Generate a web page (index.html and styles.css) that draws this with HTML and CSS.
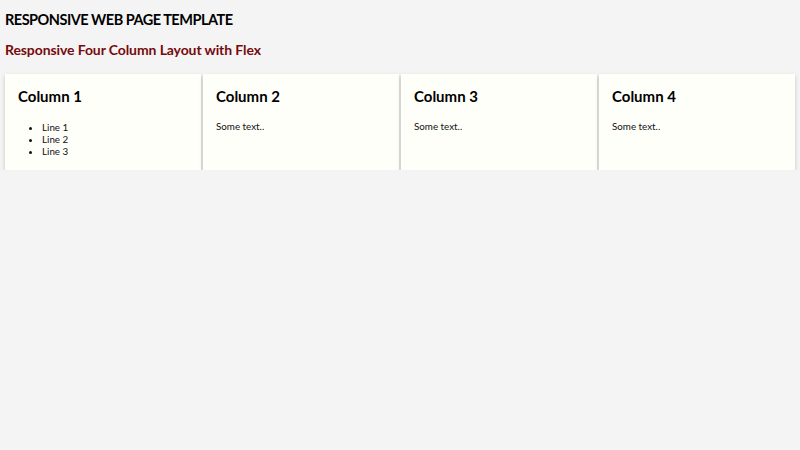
FILE: index.html
```html
<!DOCTYPE html>
<html>
<head>
<meta charset="utf-8">
<link rel="stylesheet" href="styles.css">
</head>
<body>
<h2 class="title">RESPONSIVE WEB PAGE TEMPLATE</h2>
<h3 class="subtitle">Responsive Four Column Layout with Flex</h3>
<div class="row">
  <div class="col">
    <h2 class="col-title">Column 1</h2>
    <ul class="list">
      <li>Line 1</li>
      <li>Line 2</li>
      <li>Line 3</li>
    </ul>
  </div>
  <div class="col">
    <h2 class="col-title">Column 2</h2>
    <p class="text">Some text..</p>
  </div>
  <div class="col">
    <h2 class="col-title">Column 3</h2>
    <p class="text">Some text..</p>
  </div>
  <div class="col">
    <h2 class="col-title">Column 4</h2>
    <p class="text">Some text..</p>
  </div>
</div>
</body>
</html>
```
FILE: styles.css
```css
html, body {
  margin: 0;
  padding: 0;
}
body {
  background: #f5f4f4;
  font-family: Lato, "Open Sans", sans-serif;
  color: #111;
  padding: 0 5px;
}
.title {
  margin: 0;
  padding-top: 10px;
  font-size: 14.5px;
  line-height: 19px;
  letter-spacing: -0.5px;
  font-weight: 700;
  color: #000;
}
.subtitle {
  margin: 12px 0 0;
  font-size: 14px;
  line-height: 18px;
  letter-spacing: -0.1px;
  font-weight: 700;
  color: #760a0e;
}
.row {
  display: flex;
  gap: 2px;
  margin-top: 15px;
}
.col {
  flex: 1;
  background: #fffffa;
  box-shadow: 0 2px 4px rgba(0,0,0,0.2);
  padding: 12px 13px 12px;
  height: 96px;
  box-sizing: border-box;
}
.col-title {
  margin: 0;
  font-size: 15px;
  line-height: 20px;
  font-weight: 700;
  color: #000;
}
.text {
  margin: 14px 0 0;
  font-size: 9.8px;
  line-height: 12px;
}
.list {
  margin: 15px 0 0;
  padding-left: 24px;
  font-size: 9.8px;
  line-height: 12px;
}
```
